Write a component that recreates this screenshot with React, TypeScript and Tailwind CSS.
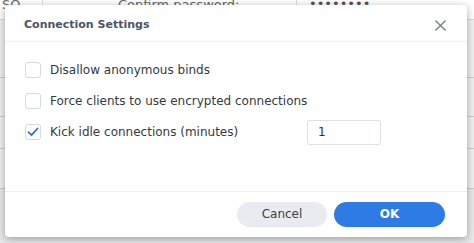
import React, { useState } from 'react';

const font = { fontFamily: '"DejaVu Sans", Verdana, sans-serif' };

const Checkbox: React.FC<{ checked: boolean; onChange: () => void }> = ({ checked, onChange }) => (
  <button
    onClick={onChange}
    className="w-[16px] h-[16px] rounded-[3px] border border-[#d6d9de] bg-white flex items-center justify-center shrink-0"
  >
    {checked && (
      <svg width="12" height="10" viewBox="0 0 12 10" fill="none">
        <path d="M1.5 5.2 L4.5 8.2 L10.5 1.5" stroke="#2f72d8" strokeWidth="1.8" strokeLinecap="round" strokeLinejoin="round" />
      </svg>
    )}
  </button>
);

export default function App() {
  const [anon, setAnon] = useState(false);
  const [force, setForce] = useState(false);
  const [kick, setKick] = useState(true);
  const [minutes, setMinutes] = useState('1');

  return (
    <div className="relative w-[474px] h-[243px] overflow-hidden bg-[#e9eaeb]" style={font}>
      {/* page behind the dialog */}
      <div className="flex flex-col">
        <div className="h-[20px] bg-white flex text-[13px] text-[#666] leading-none border-b border-[#ddd]">
          <div className="w-[43px] px-[2px] -mt-[2px] border-r border-[#ddd]">SO</div>
          <div className="w-[254px] pl-[75px] -mt-[2px] border-r border-[#ddd]">Confirm password:</div>
          <div className="flex-1 pl-[12px] -mt-[3px] text-[#555]">••••••••</div>
        </div>
        <div className="h-[58px] border-b border-[#cfcfcf] bg-[#f2f2f2]" />
        <div className="h-[39px] border-b border-[#cfcfcf] bg-[#f2f2f2]" />
        <div className="h-[32px] border-b border-[#cfcfcf] bg-[#f2f2f2]" />
        <div className="h-[40px] border-b border-[#cfcfcf] bg-[#f2f2f2]" />
      </div>

      {/* dialog */}
      <div className="absolute left-[5px] top-[5px] w-[462px] h-[232px] bg-white rounded-[4px] shadow-[0_2px_8px_rgba(0,0,0,0.35)] flex flex-col">
        <div className="h-[37px] flex items-center justify-between pl-[19px] pr-[21px] pt-[5px] border-b border-[#eef0f2]">
          <span className="text-[11px] font-bold text-[#4b5563]">Connection Settings</span>
          <button className="text-[#7b8088]">
            <svg width="11" height="11" viewBox="0 0 12 12">
              <path d="M1 1 L11 11 M11 1 L1 11" stroke="currentColor" strokeWidth="1.6" strokeLinecap="round" />
            </svg>
          </button>
        </div>

        <div className="flex-1 flex flex-col pl-[20px] pt-[20px] gap-[15px] text-[12px] text-[#35393f]">
          <label className="flex items-center gap-[9px] h-[16px]">
            <Checkbox checked={anon} onChange={() => setAnon(!anon)} />
            <span>Disallow anonymous binds</span>
          </label>
          <label className="flex items-center gap-[9px] h-[16px]">
            <Checkbox checked={force} onChange={() => setForce(!force)} />
            <span>Force clients to use encrypted connections</span>
          </label>
          <div className="flex items-center h-[16px]">
            <label className="flex items-center gap-[9px] w-[282px]">
              <Checkbox checked={kick} onChange={() => setKick(!kick)} />
              <span>Kick idle connections (minutes)</span>
            </label>
            <input
              value={minutes}
              onChange={(e) => setMinutes(e.target.value)}
              className="w-[74px] h-[25px] border border-[#dcdfe3] rounded-[3px] px-[10px] text-[12px] text-[#333] outline-none"
            />
          </div>
        </div>

        <div className="h-[46px] border-t border-[#eef0f2] flex items-center justify-end gap-[7px] pr-[22px] pb-[1px]">
          <button className="w-[90px] h-[25px] rounded-full bg-[#e8ecf1] text-[12px] text-[#3b3f45]">Cancel</button>
          <button className="w-[111px] h-[25px] rounded-full bg-[#2f7be5] text-[12px] font-bold text-white">OK</button>
        </div>
      </div>
    </div>
  );
}
